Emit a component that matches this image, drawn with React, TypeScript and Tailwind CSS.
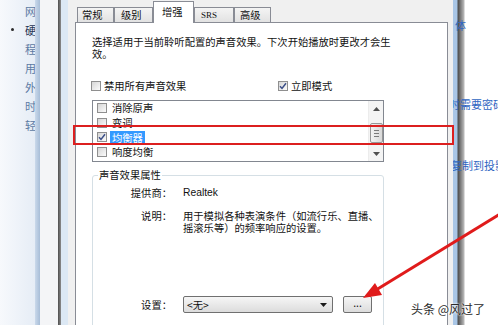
import React from "react";

const navItems = [
  { label: "网络和 Internet", active: false },
  { label: "硬件和声音", active: true },
  { label: "程序", active: false },
  { label: "用户帐户和家庭安全", active: false },
  { label: "外观和个性化", active: false },
  { label: "时钟、语言和区域", active: false },
  { label: "轻松访问", active: false },
];

const tabs = [
  { label: "常规", w: "w-[37px]", pl: "pl-[4px]" },
  { label: "级别", w: "w-[39px]", pl: "pl-[6px]" },
  { label: "增强", w: "w-[41px]", pl: "pl-[8px]", active: true },
  { label: "SRS", w: "w-[40px]", pl: "pl-[6px]", latin: true },
  { label: "高级", w: "w-[37px]", pl: "pl-[5px]" },
];

const effects = [
  { label: "消除原声", checked: false },
  { label: "变调", checked: false },
  { label: "均衡器", checked: true, selected: true },
  { label: "响度均衡", checked: false },
];

const Check = ({ checked = false }: { checked?: boolean }) => (
  <span className="flex h-[10px] w-[10px] shrink-0 items-center justify-center border border-[#8f8f8f] bg-linear-to-br from-[#d6d6d6] to-[#fbfbfb]">
    {checked && (
      <svg width="8" height="8" viewBox="0 0 8 8">
        <path d="M1 4.2 L3 6.4 L7 1.2" fill="none" stroke="#3c4f88" strokeWidth="1.5" />
      </svg>
    )}
  </span>
);

function NavColumn() {
  return (
    <div className="flex w-[35px] shrink-0 flex-col overflow-hidden bg-linear-to-r from-[#f7f9fc] to-[#e6edf6] pt-[1px] text-[11px]">
      {navItems.map((item) => (
        <div key={item.label} className="flex h-[19px] items-center whitespace-nowrap pl-[11px]">
          <span className="flex w-[14px] shrink-0 items-center">
            {item.active && <span className="h-[3px] w-[3px] rounded-full bg-[#2a2a2a]" />}
          </span>
          <span className={item.active ? "text-[#1f3556]" : "text-[#5b7aa3]"}>{item.label}</span>
        </div>
      ))}
    </div>
  );
}

function Tabs() {
  return (
    <div className="flex h-[22px] shrink-0 items-end pl-[9px]">
      {tabs.map((t) =>
        t.active ? (
          <div
            key={t.label}
            className={`relative z-10 -mb-px h-[22px] ${t.w} ${t.pl} border-x border-t border-[#898c95] bg-white pt-[4px]`}
          >
            {t.label}
          </div>
        ) : (
          <div
            key={t.label}
            className={`flex h-[15px] ${t.w} ${t.pl} items-center border-x border-t border-[#898c95] bg-linear-to-b from-[#f4f4f4] to-[#e2e2e2] ${
              t.latin ? "font-['Liberation_Serif',serif] text-[9px]" : ""
            }`}
          >
            {t.label}
          </div>
        ),
      )}
    </div>
  );
}

function Scrollbar() {
  return (
    <div className="flex w-[15px] shrink-0 flex-col items-center border-l border-[#ececec] bg-[#f4f4f4]">
      <div className="flex h-[15px] w-full items-center justify-center">
        <svg width="7" height="4" viewBox="0 0 7 4">
          <path d="M0 4 L3.5 0 L7 4 Z" fill="#505050" />
        </svg>
      </div>
      <div className="mt-[7px] flex h-[20px] w-[13px] flex-col items-center justify-center gap-[2px] rounded-[2px] border border-[#979797] bg-linear-to-r from-[#f2f2f2] to-[#d9d9d9]">
        <span className="h-px w-[5px] bg-[#7a7a7a]" />
        <span className="h-px w-[5px] bg-[#7a7a7a]" />
        <span className="h-px w-[5px] bg-[#7a7a7a]" />
      </div>
      <div className="mt-auto flex h-[15px] w-full items-center justify-center">
        <svg width="7" height="4" viewBox="0 0 7 4">
          <path d="M0 0 L3.5 4 L7 0 Z" fill="#505050" />
        </svg>
      </div>
    </div>
  );
}

function Panel() {
  return (
    <div className="ml-[7px] flex w-[373px] flex-1 flex-col border border-[#898c95] bg-white">
      <div className="mt-[13px] ml-[16px] whitespace-nowrap">
        选择适用于当前聆听配置的声音效果。下次开始播放时更改才会生
        <br />
        效。
      </div>

      <div className="mt-[20px] ml-[15px] flex h-[12px] items-center">
        <div className="flex w-[187px] items-center gap-[3px]">
          <Check />
          <span>禁用所有声音效果</span>
        </div>
        <div className="flex items-center gap-[3px]">
          <Check checked />
          <span>立即模式</span>
        </div>
      </div>

      <div className="mt-[8px] ml-[16px] flex h-[62px] w-[292px] border border-[#828790]">
        <div className="flex flex-1 flex-col">
          {effects.map((e) => (
            <div key={e.label} className="flex h-[14.5px] items-center pl-[4px]">
              <Check checked={e.checked} />
              <span
                className={`ml-[3px] px-[2px] ${e.selected ? "bg-[#3399ff] leading-[13px] text-white" : ""}`}
              >
                {e.label}
              </span>
            </div>
          ))}
        </div>
        <Scrollbar />
      </div>

      <fieldset className="mt-[7px] ml-[16px] h-[200px] w-[292px] rounded-[3px] border border-[#d5dfe5]">
        <legend className="ml-[5px] px-[1px]">声音效果属性</legend>
        <div className="mt-[6px] flex">
          <div className="w-[79px] text-right">提供商：</div>
          <div className="ml-[11px] font-['Liberation_Sans',sans-serif]">Realtek</div>
        </div>
        <div className="mt-[11px] flex">
          <div className="w-[79px] text-right">说明：</div>
          <div className="ml-[11px] whitespace-nowrap">
            用于模拟各种表演条件（如流行乐、直播、
            <br />
            摇滚乐等）的频率响应的设置。
          </div>
        </div>
        <div className="mt-[62px] flex h-[17px] items-center">
          <div className="w-[79px] text-right">设置：</div>
          <div className="ml-[11px] flex h-[17px] w-[150px] items-center justify-between rounded-[2px] border border-[#707070] bg-linear-to-b from-[#f6f6f6] to-[#dcdcdc] pr-[5px] pl-[3px]">
            <span>&lt;无&gt;</span>
            <svg width="7" height="4" viewBox="0 0 7 4">
              <path d="M0 0 L3.5 4 L7 0 Z" fill="#1a1a1a" />
            </svg>
          </div>
          <div className="ml-[10px] flex h-[17px] w-[29px] items-center justify-center rounded-[2px] border border-[#707070] bg-linear-to-b from-[#f6f6f6] to-[#dcdcdc] pb-[3px]">
            ...
          </div>
        </div>
      </fieldset>
    </div>
  );
}

function RightColumn() {
  return (
    <div className="flex w-[45px] shrink-0 flex-col overflow-hidden whitespace-nowrap bg-[linear-gradient(to_right,#a9c6e6_0px,#a9c6e6_4px,#4d4d4d_5px,#b9b9b9_11px,#ffffff_12px)] text-[11px] leading-[12px] text-[#2f66c2]">
      <div className="mt-[19px] pl-[2px]">体</div>
      <div className="mt-[67px] -ml-[4px]">时需要密码</div>
      <div className="mt-[49px] -ml-[2px]">复制到投影仪</div>
    </div>
  );
}

export default function App() {
  return (
    <div className="relative flex h-[325px] w-[498px] overflow-hidden bg-white font-['Noto_Sans_CJK_SC',sans-serif] text-[10.3px] leading-[12px] text-[#111]">
      <NavColumn />
      <div className="w-[5px] shrink-0 bg-linear-to-r from-[#cad9eb] to-[#a7bdd7]" />
      <div className="w-[18px] shrink-0 bg-[#f4f5f7]" />
      <div className="w-[3px] shrink-0 bg-linear-to-r from-[#4e4e4e] to-[#8c8c8c]" />
      <div className="w-[7px] shrink-0 bg-[#dce8f4]" />
      <div className="flex w-[385px] shrink-0 flex-col bg-[#f0f0f0]">
        <Tabs />
        <Panel />
      </div>
      <RightColumn />

      {/* annotation overlays */}
      <div className="absolute top-[125px] left-[73px] h-[20px] w-[381px] border-2 border-[#dc1f1f]" />
      <svg className="pointer-events-none absolute inset-0" width="498" height="325" viewBox="0 0 498 325">
        <line x1="500" y1="214" x2="376" y2="290" stroke="#e01b1b" strokeWidth="3" />
        <polygon points="363,298 382,295 375,283" fill="#e01b1b" />
      </svg>
      <div className="absolute top-[302px] left-[411px] text-[12px] leading-[14px] text-[#2b2b2b] [text-shadow:0_0_2px_#fff,0_0_2px_#fff]">
        头条 @风过了
      </div>
    </div>
  );
}
